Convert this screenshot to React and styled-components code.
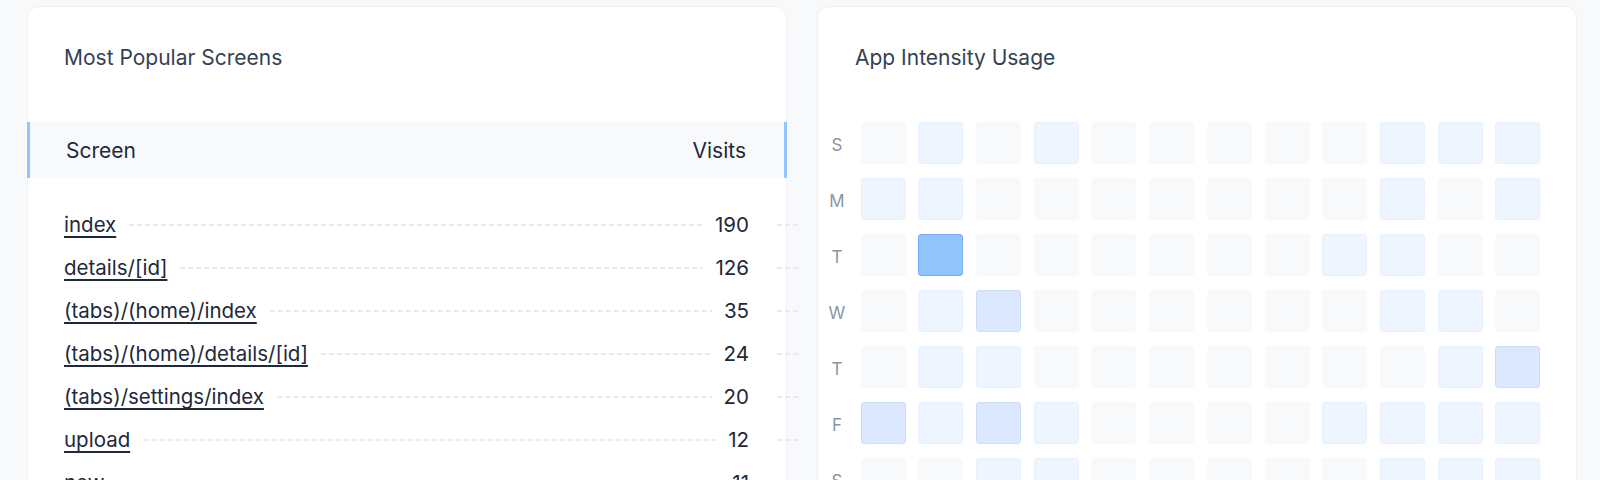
import { Fragment } from 'react'
import styled, { createGlobalStyle } from 'styled-components'

const GlobalStyle = createGlobalStyle`
    body {
        margin: 0;
        background: #f8f9fb;
        font-family: Inter, "Noto Sans", sans-serif;
        color: #1e293b;
    }
`

const Page = styled.div`
    display: grid;
    grid-template-columns: 760px 760px;
    column-gap: 30px;
    padding: 6px 0 0 27px;
    height: 474px;
    overflow: hidden;
`
const Card = styled.section`
    background: #fff;
    border: 1px solid #eef0f3;
    border-radius: 12px;
    min-height: 620px;
    box-sizing: border-box;
`
const Title = styled.h2`
    margin: 0 0 50px;
    padding: 37px 37px 0 ${p => p.$inset || 37}px;
    font-size: 21px;
    font-weight: 400;
    line-height: 28px;
    color: #334155;
`
const TableHead = styled.div`
    display: flex;
    justify-content: space-between;
    align-items: center;
    height: 56px;
    margin: 0 -1px;
    padding: 0 38px 0 36px;
    background: #f8f9fb;
    border-left: 3px solid #93c5fd;
    border-right: 3px solid #93c5fd;
    font-size: 21px;
    color: #1e293b;
`
const List = styled.div`
    padding: 25px 37px 0 36px;
`
const Row = styled.div`
    display: flex;
    align-items: center;
    height: 43px;
    font-size: 20.5px;
`
const ScreenLink = styled.a`
    color: #1e293b;
    text-decoration: underline;
    text-decoration-thickness: 1.5px;
    text-underline-offset: 4px;
    white-space: nowrap;
`
const dashes = `
    height: 2px;
    background: repeating-linear-gradient(90deg, #e8eaee 0 5px, transparent 5px 8px);
`
const Leader = styled.span`
    ${dashes}
    flex: 1;
    margin: 0 12px 0 13px;
`
const Count = styled.span`
    color: #1f2937;
`
const Tail = styled.span`
    ${dashes}
    width: 21px;
    flex: none;
    margin: 0 -49px 0 28px;
`
const HeatGrid = styled.div`
    display: grid;
    grid-template-columns: 22px repeat(12, 45px);
    column-gap: 12.7px;
    row-gap: 14px;
    padding: 0 37px 0 8px;
`
const DayLabel = styled.div`
    display: flex;
    align-items: center;
    justify-content: center;
    padding-top: 3px;
    font-size: 17px;
    color: #8b95a5;
`
const levels = [
    { bg: '#f8f9fb', edge: 'rgba(59,130,246,0)' },
    { bg: '#eef5ff', edge: 'rgba(59,130,246,0.04)' },
    { bg: '#dbe8fe', edge: 'rgba(59,130,246,0.1)' },
    { bg: '#93c5fd', edge: 'rgba(59,130,246,0.35)' },
]
const Cell = styled.div`
    height: 42px;
    border-radius: 4px;
    background: ${p => levels[p.$level].bg};
    box-shadow: inset 0 0 0 1px ${p => levels[p.$level].edge};
`

const screens = [
    ['index', 190],
    ['details/[id]', 126],
    ['(tabs)/(home)/index', 35],
    ['(tabs)/(home)/details/[id]', 24],
    ['(tabs)/settings/index', 20],
    ['upload', 12],
    ['new', 11],
]

const intensity = [
    ['S', [0, 1, 0, 1, 0, 0, 0, 0, 0, 1, 1, 1]],
    ['M', [1, 1, 0, 0, 0, 0, 0, 0, 0, 1, 0, 1]],
    ['T', [0, 3, 0, 0, 0, 0, 0, 0, 1, 1, 0, 0]],
    ['W', [0, 1, 2, 0, 0, 0, 0, 0, 0, 1, 1, 0]],
    ['T', [0, 1, 1, 0, 0, 0, 0, 0, 0, 0, 1, 2]],
    ['F', [2, 1, 2, 1, 0, 0, 0, 0, 1, 1, 1, 1]],
    ['S', [0, 0, 1, 1, 0, 0, 0, 0, 0, 1, 1, 1]],
]

const App = () => {
  return (
    <>
      <GlobalStyle />
      <Page>
        <Card>
          <Title $inset={36}>Most Popular Screens</Title>
          <TableHead>
            <span>Screen</span>
            <span>Visits</span>
          </TableHead>
          <List>
            {screens.map(([name, visits]) => (
              <Row key={name}>
                <ScreenLink href="#">{name}</ScreenLink>
                <Leader />
                <Count>{visits}</Count>
                <Tail />
              </Row>
            ))}
          </List>
        </Card>
        <Card>
          <Title>App Intensity Usage</Title>
          <HeatGrid>
            {intensity.map(([day, cells], i) => (
              <Fragment key={i}>
                <DayLabel>{day}</DayLabel>
                {cells.map((lvl, j) => <Cell key={j} $level={lvl} />)}
              </Fragment>
            ))}
          </HeatGrid>
        </Card>
      </Page>
    </>
  )
}

export default App
